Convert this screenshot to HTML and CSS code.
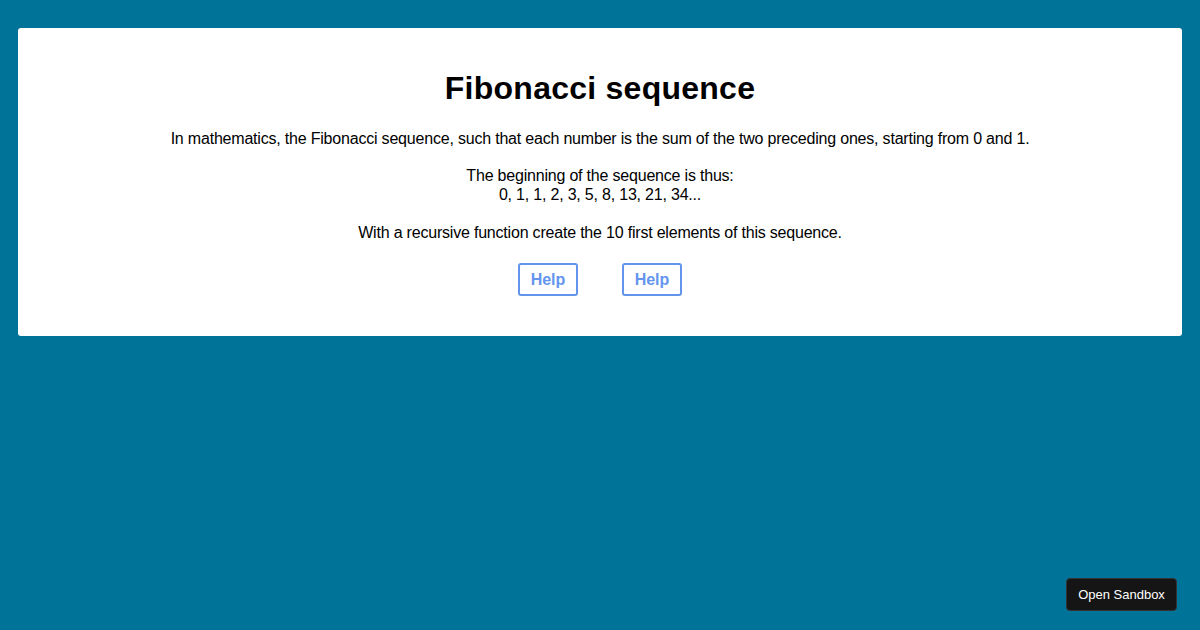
FILE: index.html
```html
<!DOCTYPE html>
<html>
<head>
<meta charset="utf-8">
<link rel="stylesheet" href="styles.css">
</head>
<body>
<main class="card">
  <h1 class="title">Fibonacci sequence</h1>
  <p class="text intro">In mathematics, the Fibonacci sequence, such that each number is the sum of the two preceding ones, starting from 0 and 1.</p>
  <p class="text">The beginning of the sequence is thus:<br>0, 1, 1, 2, 3, 5, 8, 13, 21, 34...</p>
  <p class="text task">With a recursive function create the 10 first elements of this sequence.</p>
  <div class="actions">
    <button class="help">Help</button>
    <button class="help">Help</button>
  </div>
</main>
<button class="sandbox">Open Sandbox</button>
</body>
</html>
```
FILE: styles.css
```css
html, body {
  margin: 0;
  height: 100%;
}
body {
  background: #007399;
  font-family: "Liberation Sans", Arial, sans-serif;
  color: #000;
  padding: 28px 18px;
  box-sizing: border-box;
}
.card {
  background: #fff;
  border-radius: 3px;
  padding: 40px 20px 40px;
  text-align: center;
}
.title {
  margin: 0;
  font-size: 32px;
  line-height: 40px;
  font-weight: bold;
  letter-spacing: 0.25px;
}
.text {
  margin: 18px 0 0;
  font-size: 16px;
  line-height: 19px;
  letter-spacing: -0.2px;
}
.intro {
  margin-top: 21px;
}
.task {
  margin-top: 19px;
}
.actions {
  margin-top: 21px;
  display: flex;
  justify-content: center;
  gap: 44px;
}
.help {
  width: 60px;
  height: 33px;
  border: 2px solid #6495ed;
  border-radius: 3px;
  background: #fff;
  color: #6495ed;
  font-family: "Liberation Sans", Arial, sans-serif;
  font-size: 16px;
  font-weight: bold;
  padding: 0;
}
.sandbox {
  position: fixed;
  right: 23px;
  bottom: 19px;
  width: 111px;
  height: 33px;
  background: #151515;
  color: #fff;
  border: 1px solid #333;
  border-radius: 4px;
  font-family: "Liberation Sans", Arial, sans-serif;
  font-size: 13px;
  padding: 0;
}
```
